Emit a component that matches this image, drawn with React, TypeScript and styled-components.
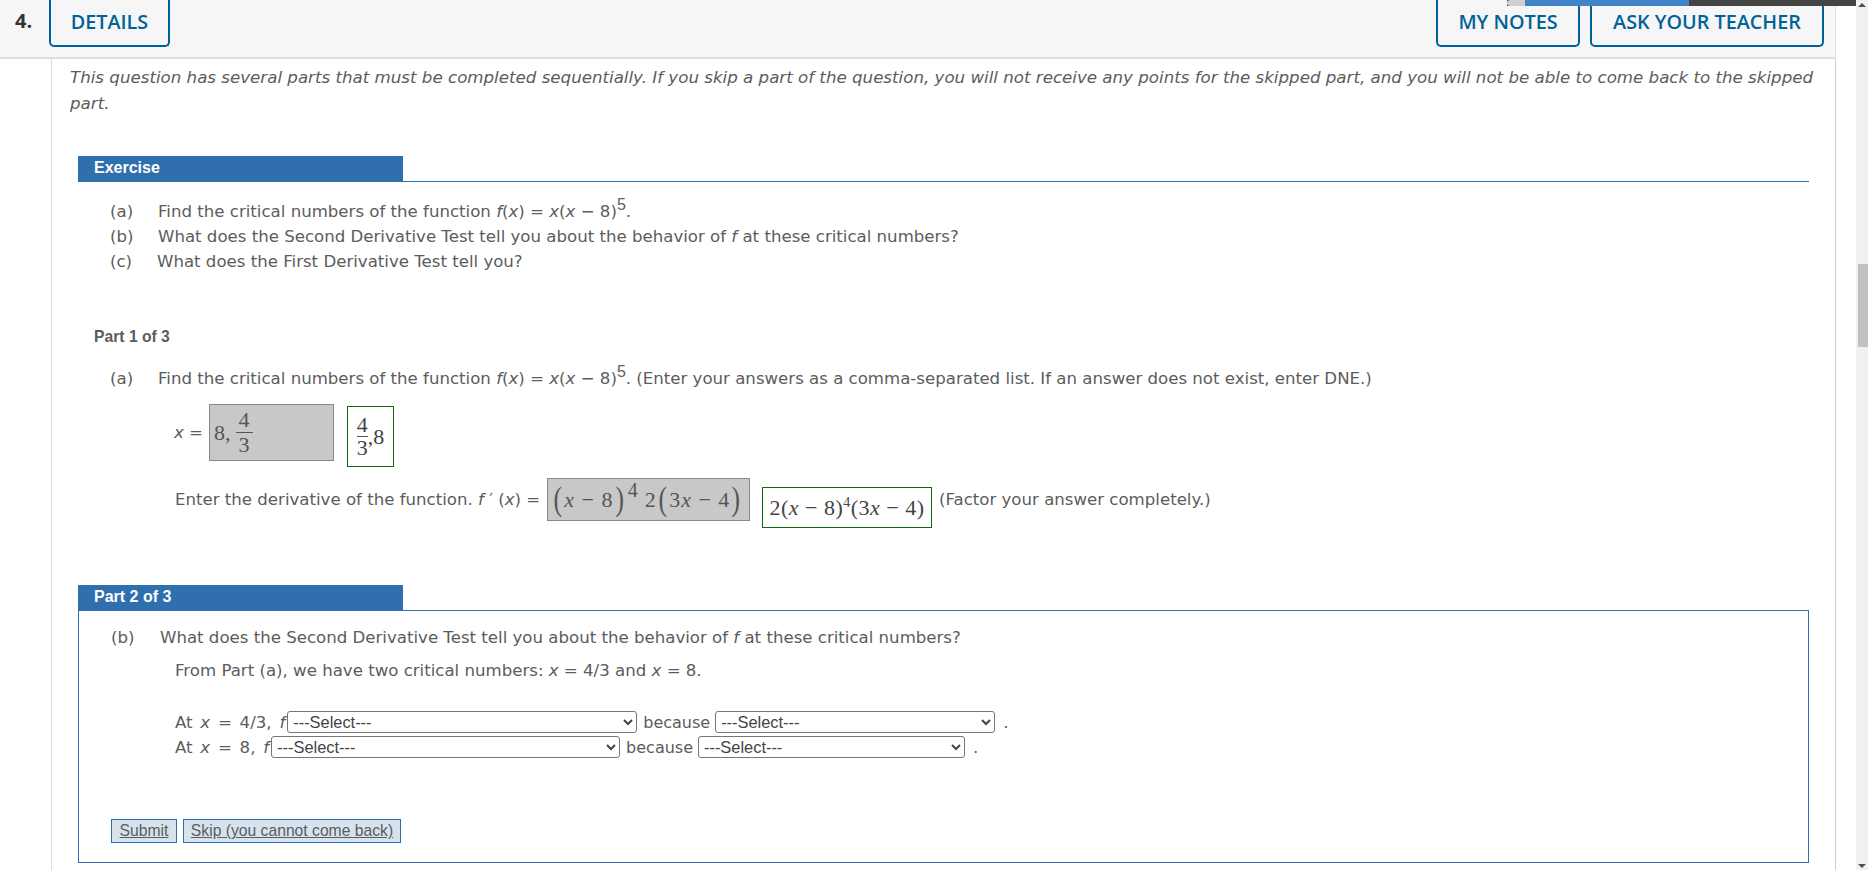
import React from "react";
import styled, { createGlobalStyle } from "styled-components";

const Global = createGlobalStyle`
  html, body { margin: 0; padding: 0; background: #fff; overflow: hidden; }
  #root { height: 870px; }
`;

const blue = "#2f6fad";
const textFont = `"DejaVu Sans", Verdana, sans-serif`;
const armFont = `"Liberation Sans", Arial, sans-serif`;
const mathFont = `"Liberation Serif", "Times New Roman", serif`;

const Page = styled.div`
  position: relative;
  display: flex;
  width: 1868px;
  height: 870px;
  overflow: hidden;
  font-family: ${textFont};
  font-size: 16.6px;
  color: #5c5c5c;
`;
const Main = styled.main`
  width: 1836px;
  flex: none;
`;
const Gutter = styled.div`
  width: 20px;
  flex: none;
`;
const Scrollbar = styled.div`
  position: relative;
  width: 12px;
  flex: none;
  background: #f1f1f1;
`;
const Thumb = styled.div`
  position: absolute;
  top: 264px;
  left: 2px;
  right: 0;
  height: 83px;
  background: #c1c1c1;
`;
const ArrowUp = styled.div`
  position: absolute;
  top: 3px;
  left: 2px;
  border-left: 4px solid transparent;
  border-right: 4px solid transparent;
  border-bottom: 4px solid #505050;
`;
const ArrowDown = styled.div`
  position: absolute;
  bottom: 2px;
  left: 2px;
  border-left: 4px solid transparent;
  border-right: 4px solid transparent;
  border-top: 4px solid #505050;
`;
const TopStrip = styled.div`
  position: absolute;
  top: 0;
  left: 1507px;
  width: 349px;
  height: 6px;
  display: flex;
  background: #444;
`;
const StripHandle = styled.div`
  width: 18px;
  background: #cfcfcf;
  border-radius: 3px 0 0 3px;
`;
const StripFill = styled.div`
  width: 164px;
  background: #4284c8;
`;

const Header = styled.header`
  display: flex;
  align-items: flex-start;
  height: 57px;
  padding-right: 11px;
  background: #f6f6f6;
  border-bottom: 2px solid #dedede;
  border-right: 1px solid #e4e4e4;
`;
const QNumber = styled.div`
  width: 49px;
  flex: none;
  padding: 9px 0 0 15px;
  box-sizing: border-box;
  font: bold 20px/24px "Open Sans", sans-serif;
  color: #333;
`;
const HeadButton = styled.div<{ $w: number; $gap?: number }>`
  box-sizing: border-box;
  width: ${(p) => p.$w}px;
  height: 47px;
  margin-left: ${(p) => p.$gap ?? 0}px;
  padding-top: 9px;
  text-align: center;
  border: 2px solid #00629b;
  border-top: none;
  border-radius: 0 0 5px 5px;
  font: 600 19.8px/26px "Open Sans", sans-serif;
  color: #00629b;
  background: #f6f6f6;
`;
const HeaderSpacer = styled.div`
  flex: 1;
`;

const Content = styled.div`
  box-sizing: border-box;
  height: 811px;
  margin-left: 51px;
  border-left: 1px solid #ddd;
  border-right: 1px solid #ccc;
  padding: 6px 26px 0;
`;
const Intro = styled.p`
  margin: 0 -10px 0 -8px;
  font-size: 16.66px;
  font-style: italic;
  line-height: 26px;
`;
const SectionHead = styled.div`
  height: 25px;
  border-bottom: 1px solid ${blue};
`;
const Tab = styled.div`
  box-sizing: border-box;
  width: 325px;
  height: 26px;
  padding-left: 16px;
  background: ${blue};
  color: #fff;
  font: bold 16px/24px ${armFont};
`;
const ExerciseHead = styled(SectionHead)`
  margin-top: 39px;
`;
const ExerciseList = styled.div`
  margin-top: 17px;
  padding-left: 32px;
`;
const Row = styled.div`
  display: flex;
  line-height: 25px;
  white-space: nowrap;
`;
const Letter = styled.span<{ $w?: number }>`
  width: ${(p) => p.$w ?? 48}px;
  flex: none;
`;
const Sup = styled.sup`
  font: 16px/0 ${armFont};
  vertical-align: 7px;
`;
const PartLabel = styled.div`
  margin: 51px 0 0 16px;
  font: bold 15.7px/24px ${armFont};
`;
const PartQuestion = styled(Row)`
  margin: 17px 0 0 32px;
`;
const AnswerRow = styled.div`
  display: flex;
  align-items: flex-start;
  margin: 13px 0 0 96px;
  white-space: nowrap;
`;
const XLabel = styled.span`
  margin-top: 16px;
  width: 35px;
  line-height: 25px;
`;
const GrayBox = styled.div<{ $w: number; $h: number }>`
  box-sizing: border-box;
  display: flex;
  align-items: center;
  width: ${(p) => p.$w}px;
  height: ${(p) => p.$h}px;
  padding-left: 4px;
  background: #c8c8c8;
  border: 1px solid #888;
  font: 22px/24px ${mathFont};
  color: #555;
`;
const GreenBox = styled.div<{ $w: number; $h: number; $ml: number; $mt: number }>`
  box-sizing: border-box;
  display: flex;
  align-items: center;
  justify-content: center;
  width: ${(p) => p.$w}px;
  height: ${(p) => p.$h}px;
  margin: ${(p) => p.$mt}px 0 0 ${(p) => p.$ml}px;
  border: 1px solid #0a6b0a;
  background: #fff;
  font: 22px/22px ${mathFont};
  color: #444;
`;
const MathLine = styled.span<{ $track: number }>`
  display: inline-block;
  white-space: nowrap;
  letter-spacing: ${(p) => p.$track}px;
`;
const Frac = styled.span<{ $barGap: number }>`
  display: inline-flex;
  flex-direction: column;
  align-items: center;
  margin-left: ${(p) => p.$barGap}px;
`;
const Num = styled.span<{ $pad: number }>`
  padding: 0 ${(p) => p.$pad}px;
  border-bottom: 1px solid #555;
`;
const DerivRow = styled.div`
  display: flex;
  align-items: flex-start;
  margin: 11px 0 0 97px;
  white-space: nowrap;
`;
const DerivLabel = styled.span`
  width: 372px;
  flex: none;
  margin-top: 9px;
  line-height: 25px;
`;
const BigParen = styled.span`
  display: inline-block;
  font-size: 34px;
  line-height: 24px;
  vertical-align: -3px;
  transform: scaleX(0.75);
`;
const MathI = styled.i`
  font-family: ${mathFont};
`;
const MathSup = styled.sup`
  font-size: 20px;
  line-height: 0;
  vertical-align: 10px;
  margin: 0 6px 0 2px;
`;
const SmallSup = styled.sup`
  font-size: 14px;
  line-height: 0;
  vertical-align: 8px;
`;
const Hint = styled.span`
  margin: 9px 0 0 7px;
  line-height: 25px;
`;
const Part2Head = styled(SectionHead)`
  margin-top: 57px;
  border-bottom: none;
`;
const Panel = styled.section`
  box-sizing: border-box;
  height: 253px;
  padding: 14px 0 0 32px;
  border: 1px solid ${blue};
`;
const FromLine = styled.div`
  margin: 8px 0 0 64px;
  line-height: 25px;
`;
const SelectBlock = styled.div`
  margin: 28px 0 0 64px;
`;
const SelectRow = styled.div`
  display: flex;
  align-items: center;
  height: 22px;
  margin-bottom: 3px;
  white-space: nowrap;
`;
const SelectLabel = styled.span`
  word-spacing: 2.5px;
`;
const Sel = styled.select<{ $w: number; $ml: number }>`
  box-sizing: border-box;
  width: ${(p) => p.$w}px;
  height: 22px;
  margin: 0 6px 0 ${(p) => p.$ml}px;
  padding: 0 0 0 1px;
  border: 1px solid #767676;
  border-radius: 3px;
  background: #fff;
  font: 16.4px ${armFont};
  color: #444;
`;
const Because = styled.span`
  font-size: 16px;
`;
const Period = styled.span`
  margin-left: 2px;
`;
const Actions = styled.div`
  display: flex;
  gap: 6px;
  margin-top: 61px;
`;
const ActionButton = styled.button<{ $w: number }>`
  box-sizing: border-box;
  width: ${(p) => p.$w}px;
  height: 24px;
  padding: 0;
  background: #d6e3ee;
  border: 1px solid ${blue};
  border-radius: 0;
  font: 15.7px ${armFont};
  color: #5c5c5c;
  text-decoration: underline;
`;

const Fx = () => (
  <>
    <i>f</i>(<i>x</i>) = <i>x</i>(<i>x</i> − 8)
    <Sup>5</Sup>.
  </>
);

const selectOption = <option>---Select---</option>;

export default function App() {
  return (
    <Page>
      <Global />
      <Main>
        <Header>
          <QNumber>4.</QNumber>
          <HeadButton $w={121}>DETAILS</HeadButton>
          <HeaderSpacer />
          <HeadButton $w={144}>MY NOTES</HeadButton>
          <HeadButton $w={234} $gap={10}>ASK YOUR TEACHER</HeadButton>
        </Header>
        <Content>
          <Intro>
            This question has several parts that must be completed sequentially. If you skip a part of the question, you will not receive any points for the skipped part, and you will not be able to come back to the skipped part.
          </Intro>
          <ExerciseHead><Tab>Exercise</Tab></ExerciseHead>
          <ExerciseList>
            <Row><Letter>(a)</Letter><span>Find the critical numbers of the function <Fx /></span></Row>
            <Row><Letter>(b)</Letter><span>What does the Second Derivative Test tell you about the behavior of <i>f</i> at these critical numbers?</span></Row>
            <Row><Letter $w={47}>(c)</Letter><span>What does the First Derivative Test tell you?</span></Row>
          </ExerciseList>
          <PartLabel>Part 1 of 3</PartLabel>
          <PartQuestion>
            <Letter>(a)</Letter>
            <span>Find the critical numbers of the function <i>f</i>(<i>x</i>) = <i>x</i>(<i>x</i> − 8)<Sup>5</Sup>. (Enter your answers as a comma-separated list. If an answer does not exist, enter DNE.)</span>
          </PartQuestion>
          <AnswerRow>
            <XLabel><i>x</i> =</XLabel>
            <GrayBox $w={125} $h={57}>
              8,<Frac $barGap={5}><Num $pad={3}>4</Num><span>3</span></Frac>
            </GrayBox>
            <GreenBox $w={47} $h={61} $ml={13} $mt={2}>
              <Frac $barGap={0}><Num $pad={0}>4</Num><span>3</span></Frac>,8
            </GreenBox>
          </AnswerRow>
          <DerivRow>
            <DerivLabel>Enter the derivative of the function. <i>f</i> ′ (<i>x</i>) =</DerivLabel>
            <GrayBox $w={203} $h={43}>
              <MathLine $track={1}>
                <BigParen>(</BigParen><MathI>x</MathI>&nbsp;−&nbsp;8<BigParen>)</BigParen>
                <MathSup>4</MathSup>2<BigParen>(</BigParen>3<MathI>x</MathI>&nbsp;−&nbsp;4<BigParen>)</BigParen>
              </MathLine>
            </GrayBox>
            <GreenBox $w={170} $h={41} $ml={12} $mt={9}>
              <MathLine $track={0.5}>
                2(<MathI>x</MathI>&nbsp;−&nbsp;8)<SmallSup>4</SmallSup>(3<MathI>x</MathI>&nbsp;−&nbsp;4)
              </MathLine>
            </GreenBox>
            <Hint>(Factor your answer completely.)</Hint>
          </DerivRow>
          <Part2Head><Tab>Part 2 of 3</Tab></Part2Head>
          <Panel>
            <Row><Letter $w={49}>(b)</Letter><span>What does the Second Derivative Test tell you about the behavior of <i>f</i> at these critical numbers?</span></Row>
            <FromLine>From Part (a), we have two critical numbers: <i>x</i> = 4/3 and <i>x</i> = 8.</FromLine>
            <SelectBlock>
              <SelectRow>
                <SelectLabel>At <i>x</i> = 4/3, <i>f</i></SelectLabel>
                <Sel $w={350} $ml={2}>{selectOption}</Sel>
                <Because>because</Because>
                <Sel $w={280} $ml={5}>{selectOption}</Sel>
                <Period>.</Period>
              </SelectRow>
              <SelectRow>
                <SelectLabel>At <i>x</i> = 8, <i>f</i></SelectLabel>
                <Sel $w={349} $ml={2}>{selectOption}</Sel>
                <Because>because</Because>
                <Sel $w={267} $ml={5}>{selectOption}</Sel>
                <Period>.</Period>
              </SelectRow>
            </SelectBlock>
            <Actions>
              <ActionButton $w={66}>Submit</ActionButton>
              <ActionButton $w={218}>Skip (you cannot come back)</ActionButton>
            </Actions>
          </Panel>
        </Content>
      </Main>
      <Gutter />
      <Scrollbar>
        <ArrowUp />
        <Thumb />
        <ArrowDown />
      </Scrollbar>
      <TopStrip><StripHandle /><StripFill /></TopStrip>
    </Page>
  );
}
